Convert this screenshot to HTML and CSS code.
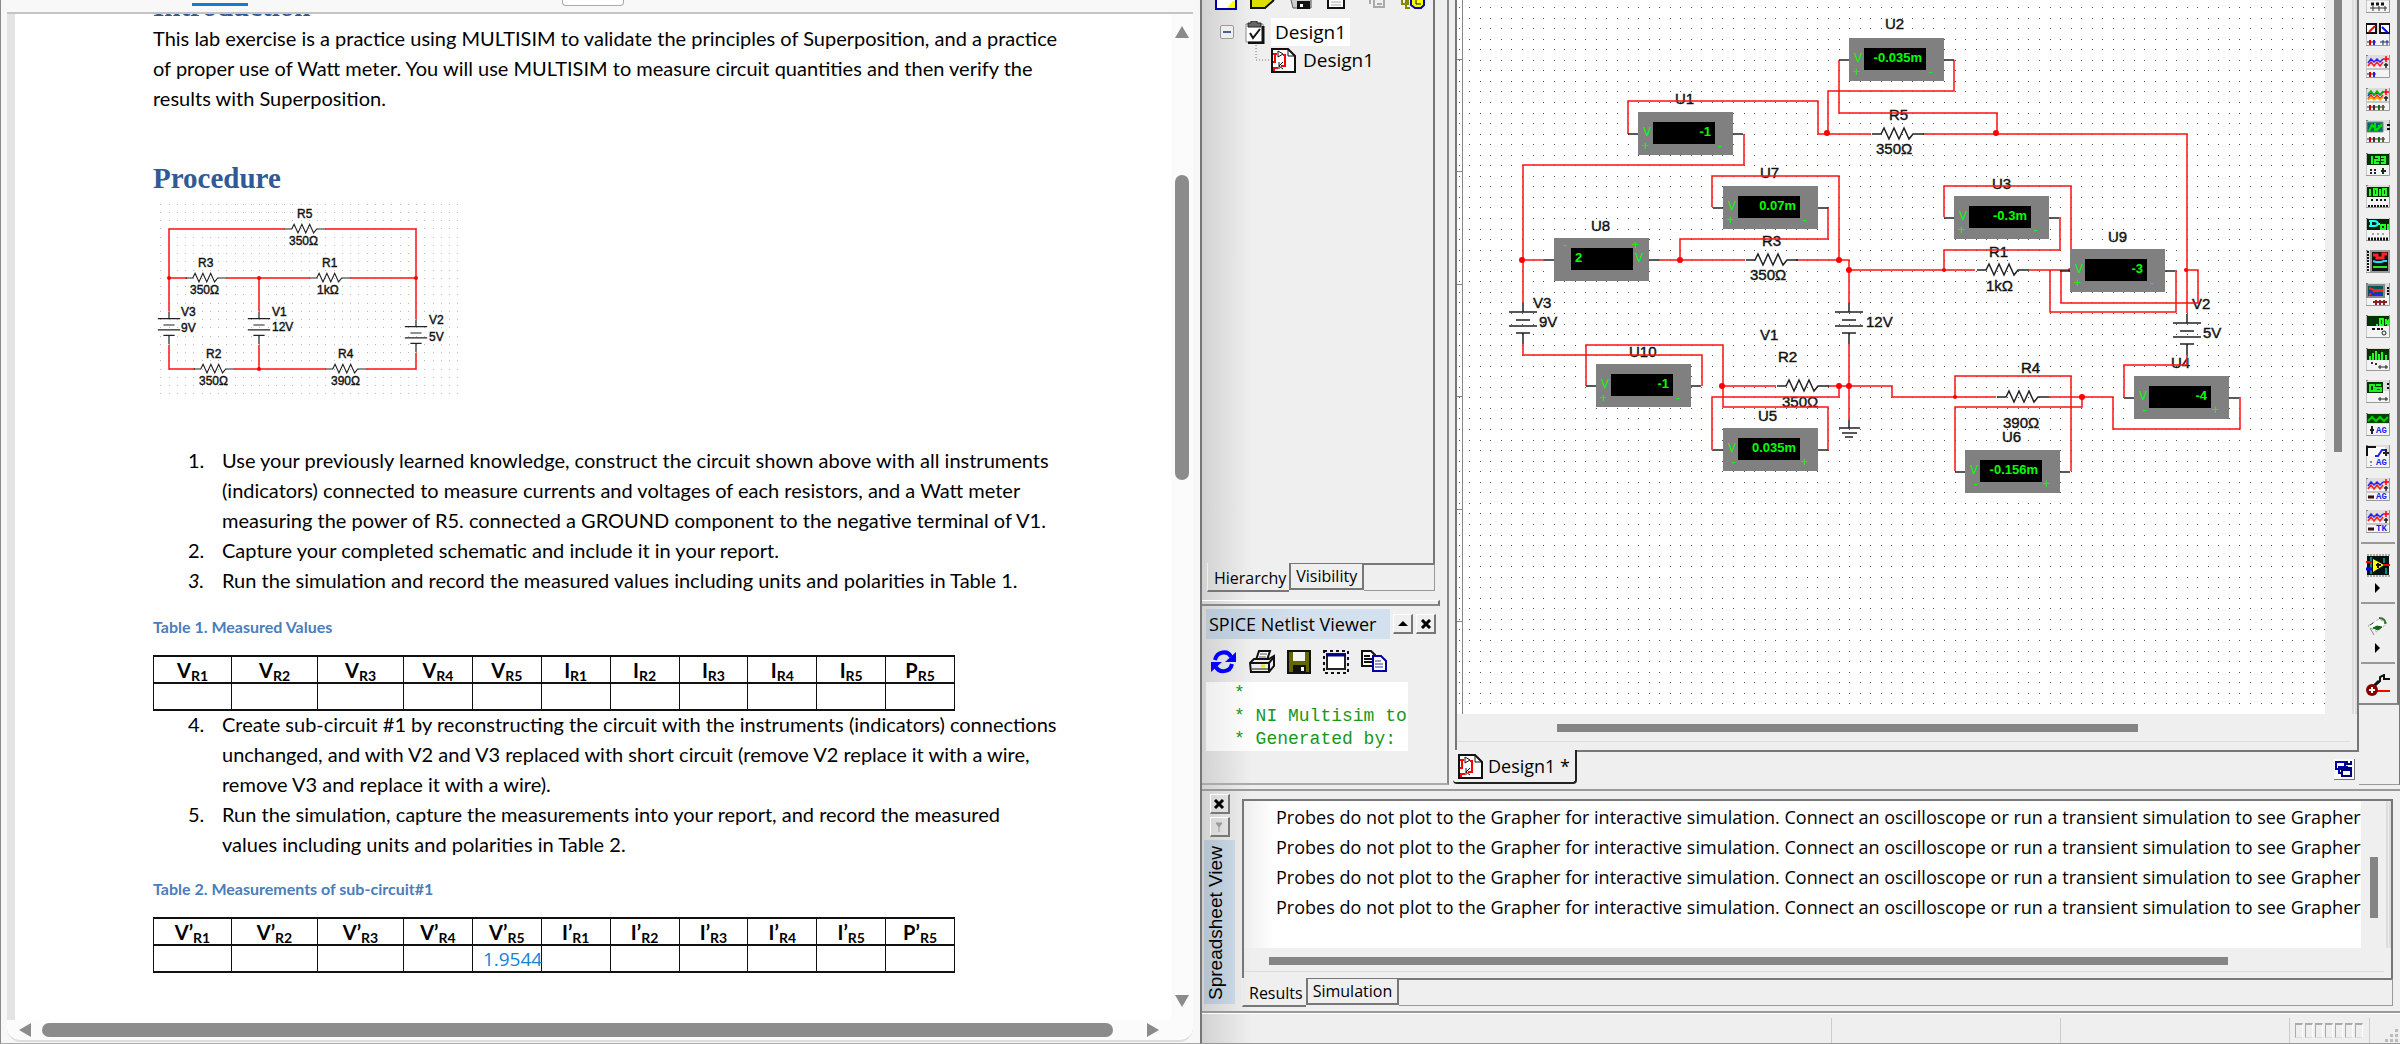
FILE: index.html
```html
<!DOCTYPE html>
<html lang="en">
<head>
    <meta charset="UTF-8">
    <meta name="viewport" content="width=device-width, initial-scale=1.0">
    <title>Superposition Lab - Multisim</title>
    <link rel="stylesheet" href="styles.css">
</head>
<body>
    <!-- Shared symbols -->
    <svg class="defs" width="0" height="0" aria-hidden="true">
        <defs>
            <path id="resistor" d="M-26 0h9l3-6 5 11 5-11 5 11 5-11 5 11 4-5h11" fill="none"/>
            <path id="battery" d="M0-22v9M-14-13h28M-7-5h14M-14 1h28M-7 8h14M0 8v11" fill="none"/>
            <g id="schematic-doc">
                <path d="M1 1h16l7 7v16H1z" fill="#fff" stroke="#111" stroke-width="2"/>
                <path d="M17 1v7h7" fill="none" stroke="#111"/>
                <path d="M2 6h4M4 6v9M2 14h3M12 7h2v11h-4M3 23v-3h4" fill="none" stroke="#f00" stroke-width="2"/>
                <path d="M7 3v6l5-3zM8 14v7M8 18l4-4M8 18l4 3" fill="#fff" stroke="#111"/>
            </g>
            <g id="frame">
                <path d="M0 0h24v23H0z" fill="#f4f4f4"/>
                <path d="M0 0h24v11H0z" fill="#ddd"/>
                <path d="M0 0v22.500h23.500V0" fill="none" stroke="#999"/>
                <path d="M0 0h2" stroke="#333"/>
            </g>
            <g id="scope-waves">
                <path d="M2 8l3-4 3 3 3-3 3 3 3-3" fill="none" stroke="#22f" stroke-width="1.500"/>
                <path d="M2 11l3-4 3 4 3-4 3 4 3-4" fill="none" stroke="#f22" stroke-width="1.500"/>
                <path d="M20 1v6M17 4h6" stroke="#f00" stroke-width="1.500"/>
                <path d="M20 8v5M18 10h4" stroke="#222" stroke-width="1.500"/>
                <path d="M1 14h22" stroke="#999"/>
            </g>
            <g id="pins-two"><path d="M1 19h9" stroke="#222"/><path d="M4 17v5" stroke="#c00" stroke-width="2"/><path d="M8 17v5" stroke="#22c" stroke-width="2"/></g>
            <g id="pins-four"><path d="M1 19h18" stroke="#222"/><path d="M4 17v5" stroke="#c00" stroke-width="2"/><path d="M8 17v5" stroke="#622" stroke-width="2"/><path d="M13 17v5" stroke="#262" stroke-width="2"/><path d="M17 17v5" stroke="#662" stroke-width="2"/></g>
        </defs>
    </svg>

    <main class="desktop">
        <section class="window word">
            <div class="word-tabs">
                <span class="tab-marker"></span>
                <span class="tab-box"></span>
            </div>
            <div class="word-body">
                <article class="page">
                    <h2 class="heading heading-cut">Introduction</h2>
                    <p class="intro">This lab exercise is a practice using MULTISIM to validate the principles of Superposition, and a practice<br>of proper use of Watt meter. You will use MULTISIM to measure circuit quantities and then verify the<br>results with Superposition.</p>
                    <h2 class="heading">Procedure</h2>
                    <svg class="circuit" width="306" height="198" viewBox="153 199 306 198">
                        <path id="smallDots" fill="#bbb"/>
                        <path class="wire" d="M169 311V229H285M325 229H416V319M169 278H187M226 278H310M350 278H416M259 278V311M169 345V369H195M234 369H326M366 369H416V353M259 345V369"/>
                        <g class="part">
                            <use href="#resistor" transform="translate(305 229) scale(.78)"/>
                            <use href="#resistor" transform="translate(206 278) scale(.78)"/>
                            <use href="#resistor" transform="translate(330 278) scale(.78)"/>
                            <use href="#resistor" transform="translate(214 369) scale(.78)"/>
                            <use href="#resistor" transform="translate(346 369) scale(.78)"/>
                            <use href="#battery" transform="translate(169 329) scale(.8)"/>
                            <use href="#battery" transform="translate(259 329) scale(.8)"/>
                            <use href="#battery" transform="translate(416 337) scale(.8)"/>
                        </g>
                        <g fill="#f00"><circle cx="169" cy="278" r="2"/><circle cx="259" cy="278" r="2"/><circle cx="416" cy="278" r="2"/><circle cx="259" cy="369" r="2"/></g>
                        <g class="small-label">
                            <text x="297" y="218">R5</text><text x="289" y="245">350Ω</text>
                            <text x="198" y="267">R3</text><text x="190" y="294">350Ω</text>
                            <text x="322" y="267">R1</text><text x="317" y="294">1kΩ</text>
                            <text x="181" y="316">V3</text><text x="181" y="332">9V</text>
                            <text x="272" y="316">V1</text><text x="272" y="331">12V</text>
                            <text x="429" y="324">V2</text><text x="429" y="341">5V</text>
                            <text x="206" y="358">R2</text><text x="199" y="385">350Ω</text>
                            <text x="338" y="358">R4</text><text x="331" y="385">390Ω</text>
                        </g>
                    </svg>

                    <ol class="steps first">
                        <li>Use your previously learned knowledge, construct the circuit shown above with all instruments<br>(indicators) connected to measure currents and voltages of each resistors, and a Watt meter<br>measuring the power of R5. connected a GROUND component to the negative terminal of V1.</li>
                        <li>Capture your completed schematic and include it in your report.</li>
                        <li class="slanted">Run the simulation and record the measured values including units and polarities in Table 1.</li>
                    </ol>

                    <table class="values">
                        <caption>Table 1. Measured Values</caption>
                        <colgroup><col class="c78"><col class="c86"><col class="c86"><col><col><col><col><col><col><col><col></colgroup>
                        <thead>
                            <tr><th>V<sub>R1</sub></th><th>V<sub>R2</sub></th><th>V<sub>R3</sub></th><th>V<sub>R4</sub></th><th>V<sub>R5</sub></th><th>I<sub>R1</sub></th><th>I<sub>R2</sub></th><th>I<sub>R3</sub></th><th>I<sub>R4</sub></th><th>I<sub>R5</sub></th><th>P<sub>R5</sub></th></tr>
                        </thead>
                        <tbody>
                            <tr><td></td><td></td><td></td><td></td><td></td><td></td><td></td><td></td><td></td><td></td><td></td></tr>
                        </tbody>
                    </table>

                    <ol class="steps" start="4">
                        <li>Create sub-circuit #1 by reconstructing the circuit with the instruments (indicators) connections<br>unchanged, and with V2 and V3 replaced with short circuit (remove V2 replace it with a wire,<br>remove V3 and replace it with a wire).</li>
                        <li>Run the simulation, capture the measurements into your report, and record the measured<br>values including units and polarities in Table 2.</li>
                    </ol>

                    <table class="values">
                        <caption>Table 2. Measurements of sub-circuit#1</caption>
                        <colgroup><col class="c78"><col class="c86"><col class="c86"><col><col><col><col><col><col><col><col></colgroup>
                        <thead>
                            <tr><th>V’<sub>R1</sub></th><th>V’<sub>R2</sub></th><th>V’<sub>R3</sub></th><th>V’<sub>R4</sub></th><th>V’<sub>R5</sub></th><th>I’<sub>R1</sub></th><th>I’<sub>R2</sub></th><th>I’<sub>R3</sub></th><th>I’<sub>R4</sub></th><th>I’<sub>R5</sub></th><th>P’<sub>R5</sub></th></tr>
                        </thead>
                        <tbody>
                            <tr><td></td><td></td><td></td><td></td><td class="answer">1.9544</td><td></td><td></td><td></td><td></td><td></td><td></td></tr>
                        </tbody>
                    </table>
                </article>
                <div class="word-vscroll">
                    <span class="arrow up"></span>
                    <span class="thumb"></span>
                    <span class="arrow down"></span>
                </div>
            </div>
            <div class="word-hscroll">
                <span class="arrow left"></span>
                <span class="thumb"></span>
                <span class="arrow right"></span>
            </div>
        </section>

        <section class="window multisim">
            <div class="upper">
                <aside class="dock">
                    <div class="tree-panel">
                        <div class="tree-tools">
                            <svg width="214" height="10" viewBox="1214 0 214 10">
                                <path d="M1216 0v9h20V0" fill="#fff" stroke="#00a" stroke-width="2"/><path d="M1227 8l6-7h2v7z" fill="#ff0"/>
                                <path d="M1251 0v8h14l9-8" fill="#dd0" stroke="#111" stroke-width="2"/>
                                <path d="M1291 0l2 8h18V0" fill="#ccc" stroke="#555"/><path d="M1297 1h13v8h-13z" fill="#111"/><path d="M1300 4h3v3h-3z" fill="#fff"/>
                                <path d="M1328 0v8h16V0" fill="#fff" stroke="#111" stroke-width="2"/><path d="M1331 2h10M1331 5h10" stroke="#aaa"/>
                                <path d="M1370 0v4M1374 0v7h10V0M1377 4h5" fill="none" stroke="#aaa" stroke-width="2"/>
                                <path d="M1402 0v4h6V0M1406 0v8h4" fill="none" stroke="#880" stroke-width="2"/><path d="M1411 0v5l4 3h6l3-3V0" fill="#ff0" stroke="#00b" stroke-width="2"/><path d="M1416 0v4h5" fill="none" stroke="#111"/>
                            </svg>
                        </div>
                        <ul class="tree">
                            <li>
                                <button class="toggle" aria-label="Collapse Design1"></button>
                                <svg width="20" height="23" viewBox="0 0 20 23"><path d="M1 3h17v18H1z" fill="#fff" stroke="#888"/><path d="M18 5v17H3" fill="none" stroke="#111" stroke-width="3"/><path d="M3 2h3V0h6v2h4v4H3z" fill="#666" stroke="#222"/><path d="M5 12l3 5 7-9" fill="none" stroke="#111" stroke-width="2"/></svg>
                                <span class="tree-name selected">Design1</span>
                            </li>
                            <li class="child">
                                <svg class="branch" width="16" height="16" viewBox="0 0 16 16"><path d="M1 0v15h15" fill="none" stroke="#777" stroke-dasharray="1 2"/></svg>
                                <svg width="25" height="25" viewBox="0 0 25 25"><use href="#schematic-doc"/></svg>
                                <span class="tree-name">Design1</span>
                            </li>
                        </ul>
                    </div>
                    <div class="tabs dock-tabs">
                        <button class="tab active">Hierarchy</button>
                        <button class="tab">Visibility</button>
                        <span class="tab-rest"></span>
                    </div>
                    <div class="splitter"></div>
                    <div class="netlist">
                        <div class="netlist-head">
                            <h3>SPICE Netlist Viewer</h3>
                            <button class="tiny" aria-label="Roll up"><svg width="10" height="5" viewBox="0 0 10 5"><path d="M0 5l5-5 5 5z"/></svg></button>
                            <button class="tiny" aria-label="Close"><svg width="12" height="10" viewBox="0 0 12 10"><path d="M2 1l8 8M10 1l-8 8" stroke="#000" stroke-width="3"/></svg></button>
                        </div>
                        <div class="netlist-tools">
                            <button aria-label="Refresh"><svg width="26" height="24" viewBox="0 0 26 24"><path d="M4 10C6 1 17 0 20 7M21 14c-2 9-13 9-16 3" fill="none" stroke="#00f" stroke-width="4"/><path d="M25 2v10H14zM0 22V12h11z" fill="#00f"/></svg></button>
                            <button aria-label="Print"><svg width="26" height="24" viewBox="0 0 26 24"><path d="M7 10l3-9h11l-3 9" fill="#fff" stroke="#111" stroke-width="2"/><path d="M11 4h7M10 7h7" stroke="#555"/><path d="M1 13l4-4h15l5-3v10l-5 6H2z" fill="#eee" stroke="#111" stroke-width="2"/><path d="M1 13h19v9M20 13l5-6" fill="none" stroke="#111" stroke-width="2"/><path d="M12 16h4" stroke="#ee0" stroke-width="3"/><path d="M3 19h16" stroke="#111"/></svg></button>
                            <button aria-label="Save"><svg width="24" height="24" viewBox="0 0 24 24"><path d="M1 1h22v22H1z" fill="#660" stroke="#111" stroke-width="2"/><path d="M6 2h12v9H6z" fill="#f4f4f4"/><path d="M6 15h13v8H6z" fill="#111"/><path d="M14 17h3v4h-3z" fill="#fff"/></svg></button>
                            <button aria-label="Select all"><svg width="26" height="24" viewBox="0 0 26 24"><path d="M1 1h24v22H1z" fill="none" stroke="#111" stroke-width="2" stroke-dasharray="3 3"/><path d="M4 4h18v15H4z" fill="#fff" stroke="#222" stroke-width="2"/><path d="M3 5h20" stroke="#008" stroke-width="3"/></svg></button>
                            <button aria-label="Copy"><svg width="26" height="24" viewBox="0 0 26 24"><path d="M1 1h9l4 4v11H1z" fill="#fff" stroke="#111" stroke-width="2"/><path d="M3 6h6M3 9h8M3 12h8" stroke="#111" stroke-width="2"/><path d="M12 6h8l5 5v10H12z" fill="#fff" stroke="#00a" stroke-width="2"/><path d="M14 11h6M14 14h8M14 17h8" stroke="#339"/></svg></button>
                        </div>
                        <pre class="netlist-code">*
* NI Multisim to
* Generated by:</pre>
                    </div>
                </aside>

                <div class="workspace">
                    <div class="sheet-window">
                        <div class="sheet-row">
                            <div class="sheet">
                                <svg class="schematic" width="870" height="714" viewBox="1457 0 870 714">
                                    <path id="dots" fill="#555"/>
                                    <path d="M1462.500 0V714M1457 59.500h6M1457 171.500h6M1457 284.500h6M1457 396.500h6M1457 509.500h6M1457 621.500h6" stroke="#888" fill="none"/>
                                    <g class="label">
                                        <text x="1885" y="29">U2</text><text x="1675" y="104">U1</text><text x="1760" y="178">U7</text><text x="1591" y="231">U8</text>
                                        <text x="1889" y="120">R5</text><text x="1876" y="154">350Ω</text>
                                        <text x="1762" y="246">R3</text><text x="1750" y="280">350Ω</text>
                                        <text x="1533" y="308">V3</text><text x="1539" y="327">9V</text>
                                        <text x="1760" y="340">V1</text><text x="1866" y="327">12V</text>
                                        <text x="1778" y="362">R2</text><text x="1782" y="407">350Ω</text>
                                        <text x="1758" y="421">U5</text><text x="1629" y="357">U10</text>
                                        <text x="1992" y="189">U3</text><text x="1989" y="257">R1</text><text x="1986" y="291">1kΩ</text>
                                        <text x="2108" y="242">U9</text><text x="2192" y="309">V2</text><text x="2203" y="338">5V</text>
                                        <text x="2171" y="368">U4</text><text x="2021" y="373">R4</text><text x="2003" y="428">390Ω</text><text x="2002" y="442">U6</text>
                                    </g>
                                    <g class="wire">
                                        <path d="M1628 134V101H1818V134H1871M1923 134H2187V313M1744 134V165H1523V303"/>
                                        <path d="M1839 60V113H1997V134M1954 60V91H1828V134"/>
                                        <path d="M1712 207V176H1839V260M1828 207V239H1680V260"/>
                                        <path d="M1523 260H1544M1659 260H1745M1796 260H1849V303M1849 270H1975M2029 270H2071"/>
                                        <path d="M1523 344V355H1702V386M1586 386V345H1723V407H1828V450M1723 386H1776"/>
                                        <path d="M1712 450V397H1839V386M1828 386H1892V397H1996M2049 397H2113V429H2240V397M1849 344V420"/>
                                        <path d="M1944 217V186H2071V270M2060 217V250H1944V270M2176 270V312H2050V270M2061 270V303H2198V270H2187"/>
                                        <path d="M1955 397V376H2071V471M2082 397V407H1955V471M2124 397V365H2187V355"/>
                                    </g>
                                    <g class="part">
                                        <use href="#resistor" x="1898" y="134"/><use href="#resistor" x="1772" y="260"/><use href="#resistor" x="2003" y="270"/>
                                        <use href="#resistor" x="1803" y="386"/><use href="#resistor" x="2023" y="397"/>
                                        <use href="#battery" x="1523" y="325"/><use href="#battery" x="1849" y="325"/><use href="#battery" x="2187" y="336"/>
                                        <path d="M1849 420v8M1839 428h21M1842 433h15M1845 437h8"/>
                                    </g>
                                    <g fill="#f00">
                                        <circle cx="1827" cy="133" r="3"/><circle cx="1996" cy="133" r="3"/><circle cx="1522" cy="260" r="3"/><circle cx="1680" cy="260" r="3"/><circle cx="1839" cy="260" r="3"/><circle cx="1849" cy="270" r="3"/>
                                        <circle cx="1722" cy="386" r="3"/><circle cx="1839" cy="386" r="3"/><circle cx="1849" cy="386" r="3"/><circle cx="1944" cy="270" r="2"/><circle cx="2070" cy="270" r="2"/><circle cx="2186" cy="270" r="2"/><circle cx="1955" cy="397" r="2"/><circle cx="2082" cy="397" r="3"/>
                                    </g>
                                    <g id="meters"></g>
                                </svg>
                            </div>
                            <div class="bar-v"><span class="thumb"></span></div>
                        </div>
                        <div class="bar-h"><span class="thumb"></span></div>
                    </div>
                    <div class="sheet-tabs">
                        <button class="sheet-tab"><svg width="25" height="25" viewBox="0 0 25 25"><use href="#schematic-doc"/></svg>Design1 *</button>
                        <span class="sheet-rest">
                            <button class="cascade" aria-label="Cascade windows"><svg width="19" height="18" viewBox="0 0 19 18"><path d="M2 2h9v7H2zM5 7h8v6H5z" fill="#fff" stroke="#00a" stroke-width="2"/><path d="M8 8h9v8H8zM8 10h9M13 1v3h4V1" fill="#fff" stroke="#007" stroke-width="2"/></svg></button>
                        </span>
                    </div>
                </div>

                <div class="instruments">
                    <div class="instrument-list">
                        <button aria-label="Distortion analyzer"><svg viewBox="0 0 24 23"><use href="#frame"/><path d="M5 14h3M10 14h3M15 14h3" stroke="#111" stroke-width="3"/><path d="M7 16v5M13 16v5M19 16v5M4 18h17" stroke="#333"/></svg></button>
                        <button aria-label="Wattmeter"><svg viewBox="0 0 24 23"><use href="#frame"/><path d="M0 1h10v9H0zM14 1h10v9H14z" fill="#fff" stroke="#111" stroke-width="2"/><path d="M3 9l6-6" stroke="#f00" stroke-width="2"/><path d="M16 4l6 6" stroke="#00f" stroke-width="2"/><use href="#pins-two"/><path d="M14 19h9M17 17v5M21 17v5" stroke="#226"/></svg></button>
                        <button aria-label="Oscilloscope"><svg viewBox="0 0 24 23"><use href="#frame"/><use href="#scope-waves"/><use href="#pins-two"/></svg></button>
                        <button aria-label="Four channel oscilloscope"><svg viewBox="0 0 24 23"><use href="#frame"/><use href="#scope-waves"/><path d="M2 6l3-3 3 4 3-4 3 4 3-4" fill="none" stroke="#0b0" stroke-width="1.500"/><path d="M2 12l3-3 3 3 3-3 3 3 3-3" fill="none" stroke="#fa0" stroke-width="1.500"/><use href="#pins-four"/></svg></button>
                        <button aria-label="Bode plotter"><svg viewBox="0 0 24 23"><use href="#frame"/><path d="M1 2h16v10H1z" fill="#066" stroke="#888"/><path d="M3 11l3-6 5 5 5-6M9 3v8M12 6h4" fill="none" stroke="#0d0" stroke-width="2"/><path d="M21 5h3M21 9h3" stroke="#111" stroke-width="2"/><use href="#pins-four"/></svg></button>
                        <button aria-label="Frequency counter"><svg viewBox="0 0 24 23"><use href="#frame"/><path d="M1 1h22v11H1z" fill="#030"/><path d="M6 3v8M9 4h4v3h-4v3h4M15 4h4v6h-4M15 7h4" fill="none" stroke="#2f2" stroke-width="2"/><path d="M5 16v5M9 16v5" stroke="#222" stroke-width="2" stroke-dasharray="2 1"/><path d="M17 15v6M15 18h5" stroke="#131" stroke-width="2"/></svg></button>
                        <button aria-label="Word generator"><svg viewBox="0 0 24 23"><use href="#frame"/><path d="M1 2h22v10H1z" fill="#030"/><path d="M4 4v7M8 4h3v6H8zM14 4v7M17 4h3v6h-3z" fill="none" stroke="#2f2" stroke-width="2"/><path d="M5 15h2M10 15h2M14 15h2M18 15h2M2 21h20" stroke="#111" stroke-width="2" stroke-dasharray="2 1"/></svg></button>
                        <button aria-label="Logic converter"><svg viewBox="0 0 24 23"><use href="#frame"/><path d="M1 1h22v11H1z" fill="#020"/><path d="M3 3h5c5 0 5 5 0 5H3M5 2v7M11 6h3" fill="none" stroke="#2ff" stroke-width="2"/><path d="M15 7h4v4h-4zM22 6v6" fill="none" stroke="#2f2" stroke-width="2"/><path d="M6 16h12" stroke="#555" stroke-dasharray="2 3"/><path d="M2 21h20" stroke="#111" stroke-width="3" stroke-dasharray="2 1"/></svg></button>
                        <button aria-label="Logic analyzer"><svg viewBox="0 0 24 23"><use href="#frame"/><path d="M5 1h18v21H5z" fill="#111" stroke="#999" stroke-width="2"/><path d="M7 5h4v3h6V4h4" fill="none" stroke="#f22" stroke-width="3"/><path d="M7 11l3 1h5l3-1h3" fill="none" stroke="#2df" stroke-width="2"/><path d="M7 17h14" stroke="#2e2" stroke-width="2"/><path d="M2 1v20" stroke="#111" stroke-width="2" stroke-dasharray="2 1"/></svg></button>
                        <button aria-label="IV analyzer"><svg viewBox="0 0 24 23"><use href="#frame"/><path d="M1 2h17v12H1z" fill="#055" stroke="#888" stroke-width="2"/><path d="M3 5l5 2h9M3 12l6-4h8" fill="none" stroke="#f22" stroke-width="2"/><path d="M3 8l5 3h8" fill="none" stroke="#22f" stroke-width="2"/><path d="M22 4v8" stroke="#111" stroke-width="2" stroke-dasharray="2 1"/><path d="M7 19h14M10 17v5M14 17v5M18 17v5" stroke="#822" stroke-width="2"/></svg></button>
                        <button aria-label="Distortion meter"><svg viewBox="0 0 24 23"><use href="#frame"/><path d="M1 1h22v10H1z" fill="#030"/><path d="M10 10h2M14 4h3v6h-3zM20 4v4l2-2v5" fill="none" stroke="#2f2" stroke-width="2"/><path d="M6 14h3M11 14h3M15 14h2" stroke="#111" stroke-width="2"/><circle cx="18" cy="18" r="2" fill="none" stroke="#222"/></svg></button>
                        <button aria-label="Spectrum analyzer"><svg viewBox="0 0 24 23"><use href="#frame"/><path d="M1 1h22v11H1z" fill="#030"/><path d="M4 12V8M7 12V5M10 12V3M13 12V6M16 12V4M20 12V7" stroke="#2f2" stroke-width="2"/><path d="M5 15h2M9 16h2" stroke="#333" stroke-width="2"/><path d="M12 19h10M14 17v4M20 17v4" stroke="#222"/></svg></button>
                        <button aria-label="Network analyzer"><svg viewBox="0 0 24 23"><use href="#frame"/><path d="M1 2h16v11H1z" fill="#030"/><path d="M4 5h4v6H4zM10 5h5M10 8h5v3h-5z" fill="none" stroke="#2e2" stroke-width="2"/><path d="M22 3v8" stroke="#111" stroke-width="2" stroke-dasharray="2 2"/><path d="M12 19h10M14 17v4M20 17v4" stroke="#222"/></svg></button>
                        <button aria-label="Agilent function generator"><svg viewBox="0 0 24 23"><use href="#frame"/><path d="M1 1h22v9H1z" fill="#040"/><path d="M2 8l4-4 4 4 4-4 4 4 4-4" fill="none" stroke="#0c0" stroke-width="2"/><path d="M6 13v8M4 17h4" stroke="#222" stroke-width="2"/><text class="brand" x="10" y="20">AG</text></svg></button>
                        <button aria-label="Agilent multimeter"><svg viewBox="0 0 24 23"><use href="#frame"/><path d="M1 2h18v9H1z" fill="#fff"/><path d="M1 11V2h9" fill="none" stroke="#111" stroke-width="2"/><path d="M9 11h3l4-6h5" fill="none" stroke="#22e" stroke-width="2"/><path d="M20 4v7M17 8h6" stroke="#222" stroke-width="2"/><path d="M5 16v5" stroke="#222" stroke-dasharray="2 2"/><text class="brand" x="10" y="20">AG</text></svg></button>
                        <button aria-label="Agilent oscilloscope"><svg viewBox="0 0 24 23"><use href="#frame"/><use href="#scope-waves"/><path d="M2 19h6" stroke="#311" stroke-width="3"/><text class="brand" x="10" y="21">AG</text></svg></button>
                        <button aria-label="Tektronix oscilloscope"><svg viewBox="0 0 24 23"><use href="#frame"/><use href="#scope-waves"/><path d="M2 19h6" stroke="#311" stroke-width="3"/><text class="brand" x="10" y="21">TK</text></svg></button>
                    </div>
                    <div class="probe-list">
                        <button class="probe" aria-label="LabVIEW instruments"><svg viewBox="0 0 24 23"><path d="M1 2h22v19H1z" fill="#011"/><path d="M1 1h23M1 22h23" stroke="#aaa" stroke-width="2" stroke-dasharray="2 1"/><path d="M5 3v17M18 4v5M20 14v6" stroke="#088" stroke-width="2"/><path d="M7 5l11 6-11 7z" fill="#ff0"/><path d="M10 11h5M12 9v5" stroke="#111" stroke-width="2"/><path d="M0 8h6M17 11h7" stroke="#f00" stroke-width="2"/><path d="M0 15h6" stroke="#00f" stroke-width="3"/></svg></button>
                        <span class="more"></span>
                        <button class="probe" aria-label="NI ELVISmx instruments"><svg viewBox="0 0 24 23"><path d="M2 12l11-7 8 4-10 9z" fill="#fff" stroke="#aaa" stroke-dasharray="3 2"/><path d="M13 4c5 0 7 3 6 6" fill="none" stroke="#373" stroke-width="2"/><path d="M4 11l3-2M7 14l5 2 4-3-5-1z" fill="#161" stroke="#161"/><path d="M4 14l4 7" stroke="#888"/></svg></button>
                        <span class="more"></span>
                        <button class="probe" aria-label="Current probe"><svg viewBox="0 0 24 23"><path d="M8 12l6-5V3l4-2v4h6" fill="none" stroke="#111" stroke-width="2"/><path d="M6 14l7-7" stroke="#111" stroke-width="3"/><path d="M10 17h14" stroke="#f00" stroke-width="2"/><circle cx="6" cy="16" r="6" fill="#800"/><path d="M6 13v6M3 16h6" stroke="#fff" stroke-width="2"/></svg></button>
                    </div>
                    <div class="instruments-foot"></div>
                </div>
            </div>

            <div class="spreadsheet">
                <div class="side-title">
                    <button class="tiny" aria-label="Close"><svg width="12" height="10" viewBox="0 0 12 10"><path d="M2 1l8 8M10 1l-8 8" stroke="#000" stroke-width="3"/></svg></button>
                    <button class="tiny" aria-label="Expand"><svg width="8" height="10" viewBox="0 0 8 10"><path d="M1 1h6L4 5zM4 3v7" fill="#999" stroke="#999"/></svg></button>
                    <h3>Spreadsheet View</h3>
                </div>
                <div class="results">
                    <div class="results-frame">
                        <div class="results-row">
                            <ul class="messages">
                                <li>Probes do not plot to the Grapher for interactive simulation. Connect an oscilloscope or run a transient simulation to see Grapher data.</li>
                                <li>Probes do not plot to the Grapher for interactive simulation. Connect an oscilloscope or run a transient simulation to see Grapher data.</li>
                                <li>Probes do not plot to the Grapher for interactive simulation. Connect an oscilloscope or run a transient simulation to see Grapher data.</li>
                                <li>Probes do not plot to the Grapher for interactive simulation. Connect an oscilloscope or run a transient simulation to see Grapher data.</li>
                            </ul>
                            <div class="bar-v results-v"><span class="thumb"></span></div>
                        </div>
                        <div class="bar-h results-h"><span class="thumb"></span></div>
                    </div>
                    <div class="tabs">
                        <button class="tab active">Results</button>
                        <button class="tab">Simulation</button>
                        <span class="tab-rest"></span>
                    </div>
                </div>
            </div>

            <div class="status">
                <span class="cell"></span>
                <span class="cell pane"></span>
                <span class="cell pane"></span>
                <span class="cell progress"><i></i><i></i><i></i><i></i><i></i><i></i><i></i></span>
                <span class="cell grip"><svg width="14" height="14" viewBox="0 0 14 14"><path d="M10 0h3v3h-3zM5 5h3v3H5zM10 5h3v3h-3zM0 10h3v3H0zM5 10h3v3H5zM10 10h3v3h-3z" fill="#bbb"/></svg></span>
            </div>
        </section>
    </main>

    <script src="script.js"></script>
</body>
</html>
```
FILE: styles.css
```css
* {
    box-sizing: border-box;
}
body {
    margin: 0;
    background: #efefef;
    color: #000;
    font-family: "Open Sans", "Noto Sans", sans-serif;
    font-size: 18px;
    overflow: hidden;
}
button {
    padding: 0;
    border: none;
    background: none;
    font: inherit;
    color: inherit;
}
svg {
    display: block;
    flex: none;
}
ul, h3, p, pre {
    margin: 0;
    padding: 0;
    font-weight: normal;
}
ul {
    list-style: none;
}
.defs {
    position: absolute;
}
.desktop {
    display: grid;
    grid-template-columns: 1fr 1fr;
    height: 100vh;
}
.window {
    display: flex;
    flex-direction: column;
    min-width: 0;
    min-height: 0;
    overflow: hidden;
}

/* Word document */
.word {
    background: #f7f7f7;
    border-left: 1px solid #8a8a8a;
    border-bottom: 1px solid #aaa;
    padding: 0 7px 1px 6px;
}
.word-tabs {
    display: flex;
    gap: 314px;
    height: 14px;
    padding-left: 185px;
    border-bottom: 2px solid #c4c4c4;
    background: #f8f8f8;
}
.tab-marker {
    width: 56px;
    height: 6px;
    border-bottom: 3px solid #1a78d2;
}
.tab-box {
    width: 62px;
    height: 6px;
    background: #fff;
    border: 1px solid #aaa;
    border-top: none;
    border-radius: 0 0 4px 4px;
}
.word-body {
    display: flex;
    flex: 1;
    min-height: 0;
    border-left: 8px solid #e4e4e4;
}
.page {
    flex: 1;
    min-width: 0;
    overflow: hidden;
    padding-left: 138px;
    background: #fff;
    counter-reset: step;
    font-family: Lato, sans-serif;
    font-size: 20px;
    line-height: 30px;
    white-space: nowrap;
}
.heading {
    margin: 50px 0 0;
    color: #2f5a94;
    font-family: "Liberation Serif", serif;
    font-size: 29px;
    line-height: 30px;
}
.heading-cut {
    margin-top: -23px;
}
.intro {
    margin-top: 2px;
}
.circuit {
    margin-top: 6px;
}
.steps {
    margin: -2px 0 1px;
    padding-left: 69px;
}
.steps.first {
    margin: 48px 0 3px;
}
.steps li {
    list-style: none;
    counter-increment: step;
}
.steps li::before {
    content: counter(step) ".";
    float: left;
    width: 34px;
    margin-left: -34px;
}
.steps .slanted::before {
    font-style: italic;
}
.values {
    width: 802px;
    table-layout: fixed;
    border-collapse: collapse;
}
.values caption {
    padding: 17px 0 16px;
    color: #4a7dbb;
    font-size: 16px;
    font-weight: bold;
    line-height: 24px;
    text-align: left;
}
.c78 {
    width: 78px;
}
.c86 {
    width: 86px;
}
.values th, .values td {
    height: 27px;
    padding: 0;
    border: 2px solid #111;
    border-width: 2px 1px;
    line-height: 24px;
}
.values sub {
    font-size: 14px;
    line-height: 0;
    vertical-align: -3px;
}
.values .answer {
    padding-left: 10px;
    color: #1583d8;
    font-family: "Open Sans", sans-serif;
    font-size: 19px;
}
.word-vscroll {
    display: flex;
    flex-direction: column;
    align-items: center;
    width: 22px;
    padding: 12px 0 13px;
    background: #fbfbfb;
}
.word-vscroll .thumb {
    width: 14px;
    height: 305px;
    margin: 137px 0 auto;
    border-radius: 7px;
    background: #8b8b8b;
}
.word-hscroll {
    display: flex;
    align-items: center;
    height: 22px;
    padding: 0 34px 0 12px;
    border-bottom: 2px solid #ddd;
    border-radius: 0 0 14px 14px;
    background: #fbfbfb;
}
.word-hscroll .thumb {
    flex: 1;
    height: 14px;
    margin: 0 34px 0 11px;
    border-radius: 7px;
    background: #8b8b8b;
}
.arrow {
    border: 7px solid transparent;
}
.up {
    border-top: none;
    border-bottom: 12px solid #8b8b8b;
}
.down {
    border-bottom: none;
    border-top: 12px solid #8b8b8b;
}
.left {
    border-left: none;
    border-right: 12px solid #8b8b8b;
}
.right {
    border-right: none;
    border-left: 12px solid #8b8b8b;
}

/* Circuit drawings */
.wire {
    fill: none;
    stroke: #f11;
    stroke-width: 1.5px;
}
.part {
    fill: none;
    stroke: #222;
    stroke-width: 1.5px;
}
.label, .small-label {
    font-family: "Liberation Sans", sans-serif;
    fill: #111;
    stroke: #111;
    stroke-width: 0.4px;
}
.label {
    font-size: 15px;
}
.small-label {
    font-size: 12px;
}
.reading {
    font: bold 13px "Liberation Sans", sans-serif;
    fill: #0f0;
}
.mark {
    font: 12px "Liberation Sans", sans-serif;
    fill: #0f0;
}
.brand {
    font: bold 9px "Liberation Mono", monospace;
    fill: #22e;
}

/* Multisim */
.multisim {
    border-left: 2px solid #777;
    border-bottom: 1px solid #999;
    background: linear-gradient(to right, #d2d2d2, #efefef 50px);
}
.upper {
    display: flex;
    flex: 1;
    min-height: 0;
    border-bottom: 2px solid #999;
}
.dock {
    display: flex;
    flex-direction: column;
    width: 247px;
    border-right: 2px solid #888;
    margin-bottom: 4px;
    border-bottom: 2px solid #aaa;
}
.tree-panel {
    flex: 1;
    margin-right: 12px;
    border-right: 2px solid #777;
}
.tree-tools {
    padding-left: 12px;
}
.tree {
    padding: 8px 0 0 18px;
    font-size: 19px;
}
.tree li {
    display: flex;
    align-items: center;
    height: 28px;
}
.tree .child {
    margin-left: 35px;
    gap: 7px;
}
.branch {
    margin: 0 -7px 14px 0;
}
.toggle {
    width: 14px;
    height: 14px;
    margin-right: 11px;
    border: 1px solid #999;
    border-radius: 2px;
    background: linear-gradient(#4a5f9a, #4a5f9a) center / 8px 2px no-repeat #eee;
}
.tree-name {
    line-height: 28px;
}
.selected {
    margin-left: 6px;
    padding: 0 4px;
    background: #fff;
}
.tabs {
    display: flex;
    align-items: flex-start;
    font-size: 16px;
}
.dock-tabs {
    margin: 0 12px 0 5px;
}
.tab {
    height: 27px;
    padding: 0 5px;
    border: 1px solid #777;
    border-width: 1px 2px 2px;
    line-height: 24px;
}
.tab.active {
    height: 29px;
    padding: 0 3px 0 6px;
    border-width: 0 0 2px 1px;
    border-left-color: #eee;
    line-height: 31px;
}
.tab-rest {
    flex: 1;
    height: 28px;
    border: 1px solid #999;
    border-width: 2px 1px 1px 0;
    border-top-color: #777;
}
.splitter {
    height: 6px;
    margin: 8px 7px 0 0;
    border-top: 1px solid #fff;
    border-right: 2px solid #777;
    border-bottom: 2px solid #888;
}
.netlist {
    height: 177px;
    padding: 3px 0 0 4px;
}
.netlist-head {
    display: flex;
    align-items: center;
    gap: 3px;
}
.netlist h3 {
    width: 184px;
    padding-left: 3px;
    background: linear-gradient(to right, #b9c8d6, #d3e1ef 90px);
    font-size: 18px;
    line-height: 30px;
    white-space: nowrap;
}
.tiny {
    display: flex;
    align-items: center;
    justify-content: center;
    width: 20px;
    height: 20px;
    border: 1px solid #fff;
    border-right: 2px solid #777;
    border-bottom: 2px solid #777;
}
.netlist-tools {
    display: flex;
    gap: 12px;
    padding: 11px 5px 8px;
}
.netlist-code {
    width: 202px;
    padding-left: 28px;
    overflow: hidden;
    background: linear-gradient(to right, #eee, #fff 50px);
    color: #1a961a;
    font-family: "Liberation Mono", monospace;
    font-size: 18px;
    line-height: 23px;
}
.workspace {
    display: flex;
    flex: 1;
    flex-direction: column;
    min-width: 0;
}
.sheet-window {
    display: flex;
    flex: 1;
    flex-direction: column;
    min-height: 0;
    margin-left: 6px;
    border-left: 2px solid #777;
    border-right: 2px solid #777;
}
.sheet-row {
    display: flex;
    flex: 1;
    min-height: 0;
}
.sheet {
    flex: 1;
    overflow: hidden;
    background: #fff;
}
.bar-v {
    width: 32px;
    padding-left: 9px;
    background: #efefef;
    border-right: 5px double #ddd;
}
.bar-v .thumb {
    display: block;
    width: 8px;
    height: 452px;
    background: #858585;
}
.bar-h {
    height: 28px;
    margin: 0 7px 8px 0;
    padding: 10px 212px 0 100px;
    border-bottom: 1px solid #ddd;
}
.bar-h .thumb {
    display: block;
    height: 8px;
    background: #858585;
}
.sheet-tabs {
    display: flex;
    height: 39px;
}
.sheet-tab {
    display: flex;
    align-items: center;
    gap: 5px;
    height: 34px;
    margin-left: 4px;
    padding: 0 5px;
    border-right: 2px solid #222;
    border-bottom: 2px solid #222;
    border-radius: 0 0 4px 4px;
    font-size: 18px;
    white-space: nowrap;
}
.sheet-rest {
    display: flex;
    flex: 1;
    justify-content: flex-end;
    padding: 7px 4px 0;
    border-top: 2px solid #777;
}
.cascade {
    width: 21px;
    height: 21px;
    border-right: 1px solid #777;
    border-bottom: 1px solid #777;
    background: #fafafa;
}
.instruments {
    display: flex;
    flex-direction: column;
    width: 41px;
    margin-bottom: 4px;
    border-right: 1px solid #777;
    border-bottom: 1px solid #999;
}
.instrument-list {
    display: flex;
    flex: 1;
    flex-direction: column;
    align-items: center;
    justify-content: space-between;
    margin-top: -10px;
    padding: 0 1px 9px 0;
    border-right: 2px solid #777;
}
.instrument-list svg, .probe svg {
    width: 24px;
    height: 23px;
}
.probe-list {
    display: flex;
    flex-direction: column;
    align-items: center;
    padding-right: 1px;
    border-right: 2px solid #777;
    border-bottom: 2px solid #888;
}
.probe {
    width: 34px;
    padding: 10px 5px 6px;
    border-top: 2px solid #999;
}
.more {
    height: 10px;
    margin-bottom: 9px;
    border: 5px solid transparent;
    border-left-color: #000;
    border-right: none;
}
.instruments-foot {
    height: 79px;
}
.spreadsheet {
    display: flex;
    height: 222px;
    padding: 3px 7px 0 2px;
    border-bottom: 2px solid #999;
}
.side-title {
    display: flex;
    flex-direction: column;
    align-items: center;
    gap: 3px;
    width: 31px;
    margin-right: 7px;
}
.side-title h3 {
    flex: 1;
    width: 31px;
    margin-bottom: 7px;
    padding: 4px 0 0 4px;
    background: linear-gradient(to left, #b4c2d0, #c8d6e3);
    font-family: "Liberation Sans", sans-serif;
    font-size: 19px;
    line-height: 24px;
    text-align: left;
    white-space: nowrap;
    writing-mode: vertical-rl;
    transform: rotate(180deg);
}
.results {
    display: flex;
    flex: 1;
    flex-direction: column;
    min-width: 0;
    padding: 5px 0 4px;
}
.results-frame {
    display: flex;
    flex: 1;
    flex-direction: column;
    min-height: 0;
    border: 2px solid #777;
    border-bottom: none;
}
.results-row {
    display: flex;
    flex: 1;
    min-height: 0;
}
.messages {
    flex: 1;
    min-width: 0;
    padding: 1px 0 0 32px;
    overflow: hidden;
    background: linear-gradient(to right, #eee, #fff 30px);
    font-size: 18px;
    line-height: 30px;
    white-space: nowrap;
}
.results-v {
    width: 30px;
    padding-top: 56px;
}
.results-v .thumb {
    height: 61px;
}
.results-h {
    height: 24px;
    margin: 0 7px 6px 0;
    padding: 9px 156px 0 25px;
}
.status {
    display: flex;
    align-items: stretch;
    height: 30px;
    padding: 4px 1px 0;
    border-top: 1px solid #fff;
}
.cell {
    border-right: 1px solid #ccc;
}
.cell:first-child {
    flex: 1;
}
.pane {
    width: 229px;
}
.progress {
    display: flex;
    gap: 2px;
    width: 80px;
    padding: 5px 5px;
}
.progress i {
    width: 8px;
    height: 15px;
    border: 1px solid #aaa;
    border-right-color: #fff;
    border-bottom-color: #ddd;
    border-top-width: 2px;
}
.grip {
    display: flex;
    align-items: flex-end;
    justify-content: flex-end;
    width: 29px;
    border: none;
}
```
FILE: script.js
```js
// Grid dots behind a circuit
function drawDots(id, x0, y0, cols, rows, step, size) {
    let d = '';
    for (let r = 0; r < rows; r++) {
        for (let c = 0; c < cols; c++) {
            const x = Math.round(x0 + c * step);
            const y = Math.round(y0 + r * step);
            d += `M${x} ${y}h${size}v${size}h-${size}z`;
        }
    }
    document.getElementById(id).setAttribute('d', d);
}

// Multimeters: body corner, reading, and whether the + pin is on the right
const meters = [
    { x: 1638, y: 112, value: '-1' },
    { x: 1849, y: 38, value: '-0.035m' },
    { x: 1723, y: 186, value: '0.07m' },
    { x: 1554, y: 238, value: '2', mirrored: true },
    { x: 1596, y: 364, value: '-1' },
    { x: 1723, y: 428, value: '0.035m', plusRight: true },
    { x: 1954, y: 196, value: '-0.3m' },
    { x: 2070, y: 249, value: '-3' },
    { x: 2134, y: 376, value: '-4', plusRight: true },
    { x: 1965, y: 450, value: '-0.156m', plusRight: true }
];

function meterMarkup(m) {
    const left = m.mirrored ? 17 : 15;
    const textX = m.mirrored ? m.x + left + 4 : m.x + 73;
    const anchor = m.mirrored ? 'start' : 'end';
    const vX = m.mirrored ? m.x + 81 : m.x + 5;
    const signY = m.mirrored ? m.y + 11 : m.y + 38;
    const plusX = m.mirrored || m.plusRight ? m.x + 78 : m.x + 4;
    const minusX = m.mirrored || m.plusRight ? m.x + 9 : m.x + 80;
    return `
        <path d="M${m.x - 10} ${m.y + 22}h115" stroke="#222" stroke-width="1.5"/>
        <rect x="${m.x}" y="${m.y}" width="95" height="43" fill="#808080"/>
        <rect x="${m.x + left}" y="${m.y + 10}" width="62" height="22" fill="#000"/>
        <text class="reading" x="${textX}" y="${m.y + 24}" text-anchor="${anchor}">${m.value}</text>
        <text class="mark" x="${vX}" y="${m.y + 24}">V</text>
        <text class="mark" x="${plusX}" y="${signY}">+</text>
        <text class="mark" x="${minusX}" y="${signY}">-</text>
    `;
}

drawDots('dots', 1458.7, 7, 83, 68, 10.55, 1);
drawDots('smallDots', 160.3, 203.5, 37, 24, 8.25, 1);
document.getElementById('meters').innerHTML = meters.map(meterMarkup).join('');
```
